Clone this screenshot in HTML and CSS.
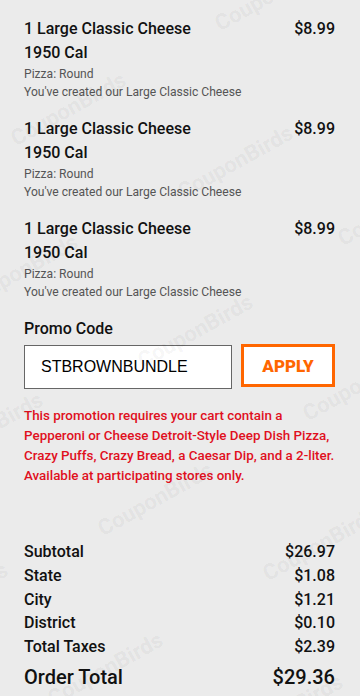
FILE: index.html
```html
<!DOCTYPE html>
<html>
<head>
<meta charset="utf-8">
<link rel="stylesheet" href="styles.css">
</head>
<body>
<div class="page">
  <div class="item">
    <div class="item-head"><span>1 Large Classic Cheese</span><span>$8.99</span></div>
    <div class="cal">1950 Cal</div>
    <div class="sub">Pizza: Round</div>
    <div class="sub">You've created our Large Classic Cheese</div>
  </div>
  <div class="item">
    <div class="item-head"><span>1 Large Classic Cheese</span><span>$8.99</span></div>
    <div class="cal">1950 Cal</div>
    <div class="sub">Pizza: Round</div>
    <div class="sub">You've created our Large Classic Cheese</div>
  </div>
  <div class="item">
    <div class="item-head"><span>1 Large Classic Cheese</span><span>$8.99</span></div>
    <div class="cal">1950 Cal</div>
    <div class="sub">Pizza: Round</div>
    <div class="sub">You've created our Large Classic Cheese</div>
  </div>
  <div class="promo">
    <div class="promo-label">Promo Code</div>
    <div class="promo-row">
      <div class="promo-input">STBROWNBUNDLE</div>
      <div class="promo-btn">APPLY</div>
    </div>
    <p class="promo-msg">This promotion requires your cart contain a Pepperoni or Cheese Detroit-Style Deep Dish Pizza, Crazy Puffs, Crazy Bread, a Caesar Dip, and a 2-liter. Available at participating stores only.</p>
  </div>
  <div class="totals">
    <div class="row"><span>Subtotal</span><span>$26.97</span></div>
    <div class="row"><span>State</span><span>$1.08</span></div>
    <div class="row"><span>City</span><span>$1.21</span></div>
    <div class="row"><span>District</span><span>$0.10</span></div>
    <div class="row"><span>Total Taxes</span><span>$2.39</span></div>
    <div class="row total"><span>Order Total</span><span>$29.36</span></div>
  </div>
</div>
<div class="watermarks" aria-hidden="true">
  <span class="wm" style="left:222px;top:35px">CouponBirds</span>
  <span class="wm" style="left:18px;top:150px">CouponBirds</span>
  <span class="wm" style="left:185px;top:203px">CouponBirds</span>
  <span class="wm" style="left:345px;top:250px">CouponBirds</span>
  <span class="wm" style="left:-30px;top:312px">CouponBirds</span>
  <span class="wm" style="left:145px;top:372px">CouponBirds</span>
  <span class="wm" style="left:310px;top:425px">CouponBirds</span>
  <span class="wm" style="left:-65px;top:470px">CouponBirds</span>
  <span class="wm" style="left:105px;top:540px">CouponBirds</span>
  <span class="wm" style="left:270px;top:585px">CouponBirds</span>
  <span class="wm" style="left:-100px;top:640px">CouponBirds</span>
  <span class="wm" style="left:55px;top:710px">CouponBirds</span>
  <span class="wm" style="left:235px;top:752px">CouponBirds</span>
</div>
</body>
</html>
```
FILE: styles.css
```css
html, body {
  margin: 0;
  padding: 0;
  background: #ebebeb;
}
body {
  font-family: Roboto, "Liberation Sans", sans-serif;
  color: #111;
  position: relative;
  overflow: hidden;
  height: 696px;
}
.page {
  padding: 17px 25px 0 24px;
  display: flex;
  flex-direction: column;
}
.item {
  display: flex;
  flex-direction: column;
  margin-bottom: 16px;
}
.item-head {
  display: flex;
  justify-content: space-between;
  font-size: 16px;
  font-weight: 500;
  line-height: 24px;
}
.cal {
  font-size: 16px;
  font-weight: 500;
  line-height: 24px;
}
.sub {
  font-size: 12.1px;
  line-height: 18px;
  color: #555;
}
.promo-label {
  font-size: 16px;
  font-weight: 500;
  line-height: 24px;
}
.promo-row {
  display: flex;
  gap: 9px;
  margin-top: 4px;
}
.promo-input {
  width: 190px;
  height: 42px;
  border: 1px solid #666;
  background: #fff;
  font-family: "Liberation Sans", Arial, sans-serif;
  font-size: 16px;
  line-height: 42px;
  padding-left: 16px;
  color: #000;
}
.promo-btn {
  flex: 1;
  height: 37px;
  border: 3px solid #ff6600;
  background: #fff;
  color: #ff6600;
  font-weight: 900;
  font-size: 17px;
  display: flex;
  align-items: center;
  justify-content: center;
  margin-top: -1px;
}
.promo-msg {
  margin: 17px 0 0;
  font-size: 13.4px;
  line-height: 20px;
  font-weight: 500;
  color: #e0101e;
}
.totals {
  margin-top: 54px;
}
.row {
  display: flex;
  justify-content: space-between;
  font-size: 16px;
  font-weight: 500;
  line-height: 24px;
  height: 23.75px;
}
.row.total {
  font-size: 20px;
  line-height: 30px;
  height: 30px;
  margin-top: 3px;
}
.watermarks {
  position: absolute;
  left: 0;
  top: 0;
  width: 360px;
  height: 696px;
  overflow: hidden;
  pointer-events: none;
}
.wm {
  position: absolute;
  font-family: Roboto, "Liberation Sans", sans-serif;
  font-weight: 700;
  font-size: 22px;
  line-height: 22px;
  color: rgba(0, 0, 0, 0.05);
  white-space: nowrap;
  transform-origin: 0 100%;
  transform: translateY(-22px) rotate(-29deg);
}
```
